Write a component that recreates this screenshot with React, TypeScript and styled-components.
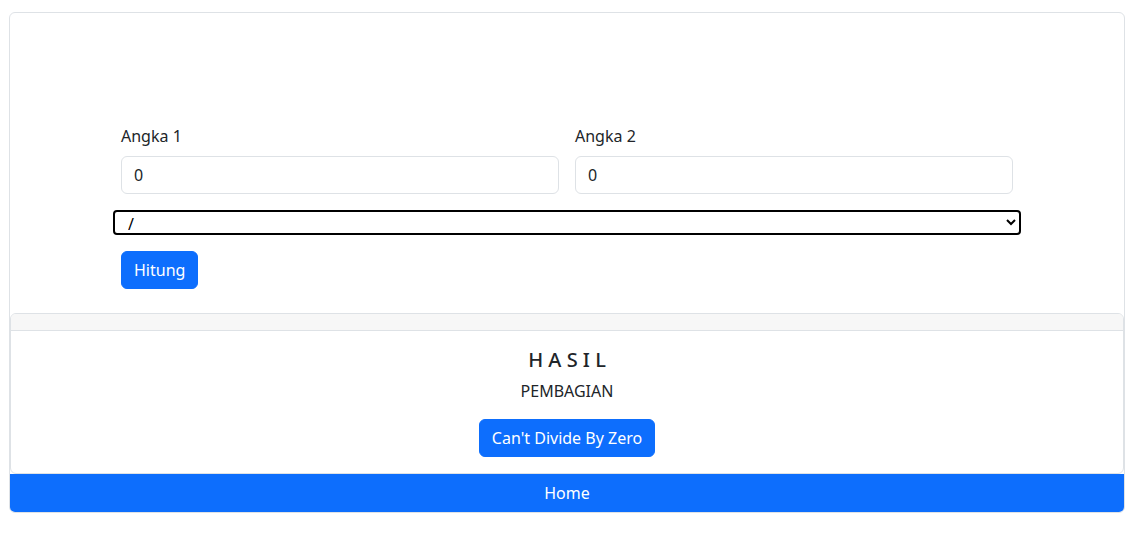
import React from "react";
import styled, { createGlobalStyle } from "styled-components";

const Global = createGlobalStyle`
  * { box-sizing: border-box; }
  body {
    margin: 0;
    font-family: "Segoe UI", "Noto Sans", "Open Sans", sans-serif;
    font-size: 16px;
    line-height: 1.5;
    color: #212529;
    background: #fff;
  }
`;

const Page = styled.div`
  padding: 12px 10px 0 9px;
`;

const Card = styled.div`
  border: 1px solid #dee2e6;
  border-radius: 6px;
  display: flex;
  flex-direction: column;
`;

const FormArea = styled.div`
  padding: 111px 0 24px 0;
  display: flex;
  justify-content: center;
`;

const Container = styled.form`
  width: 908px;
  display: flex;
  flex-direction: column;
`;

const Row = styled.div`
  display: grid;
  grid-template-columns: 1fr 1fr;
`;

const Col = styled.div`
  padding: 0 8px;
  display: flex;
  flex-direction: column;
`;

const Label = styled.label`
  margin-bottom: 8px;
  line-height: 24px;
`;

const Input = styled.input`
  height: 38px;
  border: 1px solid #dee2e6;
  border-radius: 6px;
  padding: 6px 12px;
  font: inherit;
  color: #212529;
  outline: none;
`;

const Select = styled.select`
  margin-top: 16px;
  height: 25px;
  width: 100%;
  border: 2px solid #000;
  border-radius: 4px;
  padding: 0 9px;
  font-family: inherit;
  font-size: 16px;
  color: #000;
  background: #fff;
  outline: none;
`;

const ButtonRow = styled.div`
  padding: 16px 8px 0;
`;

const Button = styled.button`
  height: 38px;
  padding: 6px 12px;
  border: 1px solid #0d6efd;
  border-radius: 6px;
  background: #0d6efd;
  color: #fff;
  font: inherit;
  cursor: pointer;
`;

const ResultCard = styled.div`
  border: 1px solid #dee2e6;
  border-radius: 6px;
  display: flex;
  flex-direction: column;
`;

const ResultHeader = styled.div`
  height: 17px;
  background: #f7f7f7;
  border-bottom: 1px solid #dee2e6;
  border-radius: 5px 5px 0 0;
`;

const ResultBody = styled.div`
  padding: 17px 16px 16px;
  display: flex;
  flex-direction: column;
  align-items: center;
`;

const Title = styled.h5`
  margin: 0 0 7px;
  font-size: 20px;
  font-weight: 500;
  line-height: 24px;
  letter-spacing: 0;
`;

const Sub = styled.p`
  margin: 0 0 16px;
  line-height: 24px;
`;

const HomeButton = styled.button`
  height: 38px;
  border: none;
  border-radius: 0 0 5px 5px;
  background: #0d6efd;
  color: #fff;
  font: inherit;
  cursor: pointer;
`;

export default function App() {
  return (
    <Page>
      <Global />
      <Card>
        <FormArea>
          <Container onSubmit={(e) => e.preventDefault()}>
            <Row>
              <Col>
                <Label>Angka 1</Label>
                <Input defaultValue="0" />
              </Col>
              <Col>
                <Label>Angka 2</Label>
                <Input defaultValue="0" />
              </Col>
            </Row>
            <Select defaultValue="/">
              <option value="+">+</option>
              <option value="-">-</option>
              <option value="*">*</option>
              <option value="/">/</option>
            </Select>
            <ButtonRow>
              <Button type="submit">Hitung</Button>
            </ButtonRow>
          </Container>
        </FormArea>
        <ResultCard>
          <ResultHeader />
          <ResultBody>
            <Title>H A S I L</Title>
            <Sub>PEMBAGIAN</Sub>
            <Button>Can't Divide By Zero</Button>
          </ResultBody>
        </ResultCard>
        <HomeButton>Home</HomeButton>
      </Card>
    </Page>
  );
}
